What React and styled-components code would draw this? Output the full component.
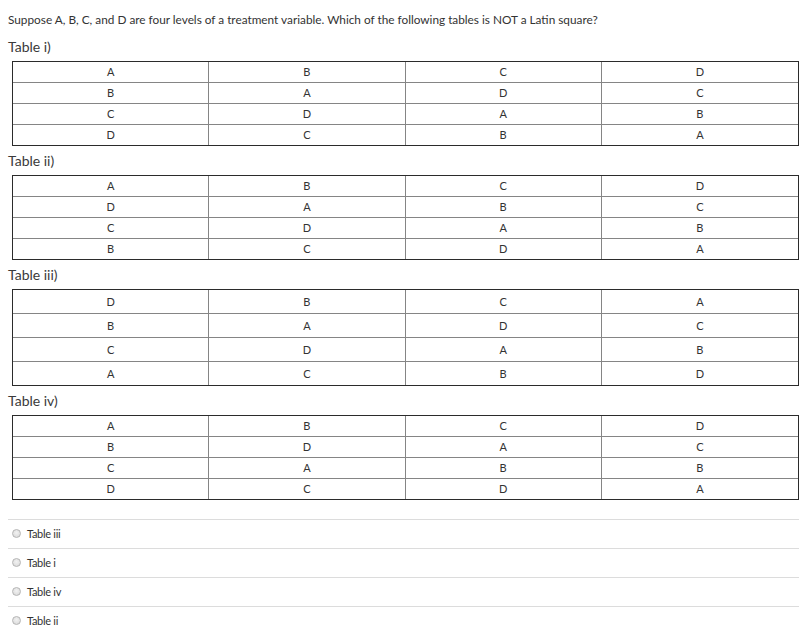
import React from 'react';
import styled, { createGlobalStyle } from 'styled-components';

const GlobalStyle = createGlobalStyle`
  body {
    margin: 0;
    background: #fff;
    font-family: Lato, "Liberation Sans", sans-serif;
    color: #333;
  }
`;

const Page = styled.div`
  width: 804px;
  padding: 12px 5px 0 8px;
  box-sizing: border-box;
`;

const Question = styled.p`
  margin: 0;
  font-size: 11.8px;
  line-height: 16px;
  color: #333;
`;

const Label = styled.p`
  margin: ${(p) => (p.first ? '9px' : '5px')} 0 4px;
  font-size: 14px;
  line-height: 20px;
  color: #3a3a3a;
`;

const Grid = styled.table`
  margin-left: 4px;
  width: 787px;
  table-layout: fixed;
  border-collapse: separate;
  border-spacing: 0;
  border: 1px solid #2b2b2b;
`;

const Cell = styled.td`
  height: ${(p) => p.rowHeight}px;
  padding: 0;
  text-align: center;
  vertical-align: middle;
  font-size: 11px;
  line-height: 12px;
  color: #333;
  border-right: 1px solid #858585;
  border-bottom: 1px solid #858585;

  &:last-child {
    border-right: none;
  }

  tr:last-child > & {
    border-bottom: none;
  }
`;

const Options = styled.div`
  margin-top: 19px;
`;

const Option = styled.label`
  display: flex;
  align-items: center;
  gap: 6px;
  height: 29px;
  padding: 0 0 2px 4px;
  box-sizing: border-box;
  border-top: 1px solid #dcdcdc;
  font-size: 11px;
  color: #333;
  letter-spacing: -0.3px;
`;

const Radio = styled.span`
  width: 7px;
  height: 7px;
  border-radius: 50%;
  border: 1px solid #b5b5b5;
  background: radial-gradient(circle at 50% 40%, #f2f2f2, #d6d6d6);
  flex-shrink: 0;
`;

const tables = [
  {
    name: 'Table i)',
    rowHeight: 20,
    rows: ['ABCD', 'BADC', 'CDAB', 'DCBA'],
  },
  {
    name: 'Table ii)',
    rowHeight: 20,
    rows: ['ABCD', 'DABC', 'CDAB', 'BCDA'],
  },
  {
    name: 'Table iii)',
    rowHeight: 23,
    rows: ['DBCA', 'BADC', 'CDAB', 'ACBD'],
  },
  {
    name: 'Table iv)',
    rowHeight: 20,
    rows: ['ABCD', 'BDAC', 'CABB', 'DCDA'],
  },
];

const choices = ['Table iii', 'Table i', 'Table iv', 'Table ii'];

function LatinTable({ name, rows, rowHeight, first }) {
  return (
    <>
      <Label first={first}>{name}</Label>
      <Grid>
        <tbody>
          {rows.map((row, i) => (
            <tr key={i}>
              {row.split('').map((ch, j) => (
                <Cell key={j} rowHeight={rowHeight}>{ch}</Cell>
              ))}
            </tr>
          ))}
        </tbody>
      </Grid>
    </>
  );
}

export default function App() {
  return (
    <Page>
      <GlobalStyle />
      <Question>
        Suppose A, B, C, and D are four levels of a treatment variable. Which of the following tables is NOT a Latin square?
      </Question>
      {tables.map((t, i) => (
        <LatinTable key={t.name} {...t} first={i === 0} />
      ))}
      <Options>
        {choices.map((c) => (
          <Option key={c}>
            <Radio />
            {c}
          </Option>
        ))}
      </Options>
    </Page>
  );
}
